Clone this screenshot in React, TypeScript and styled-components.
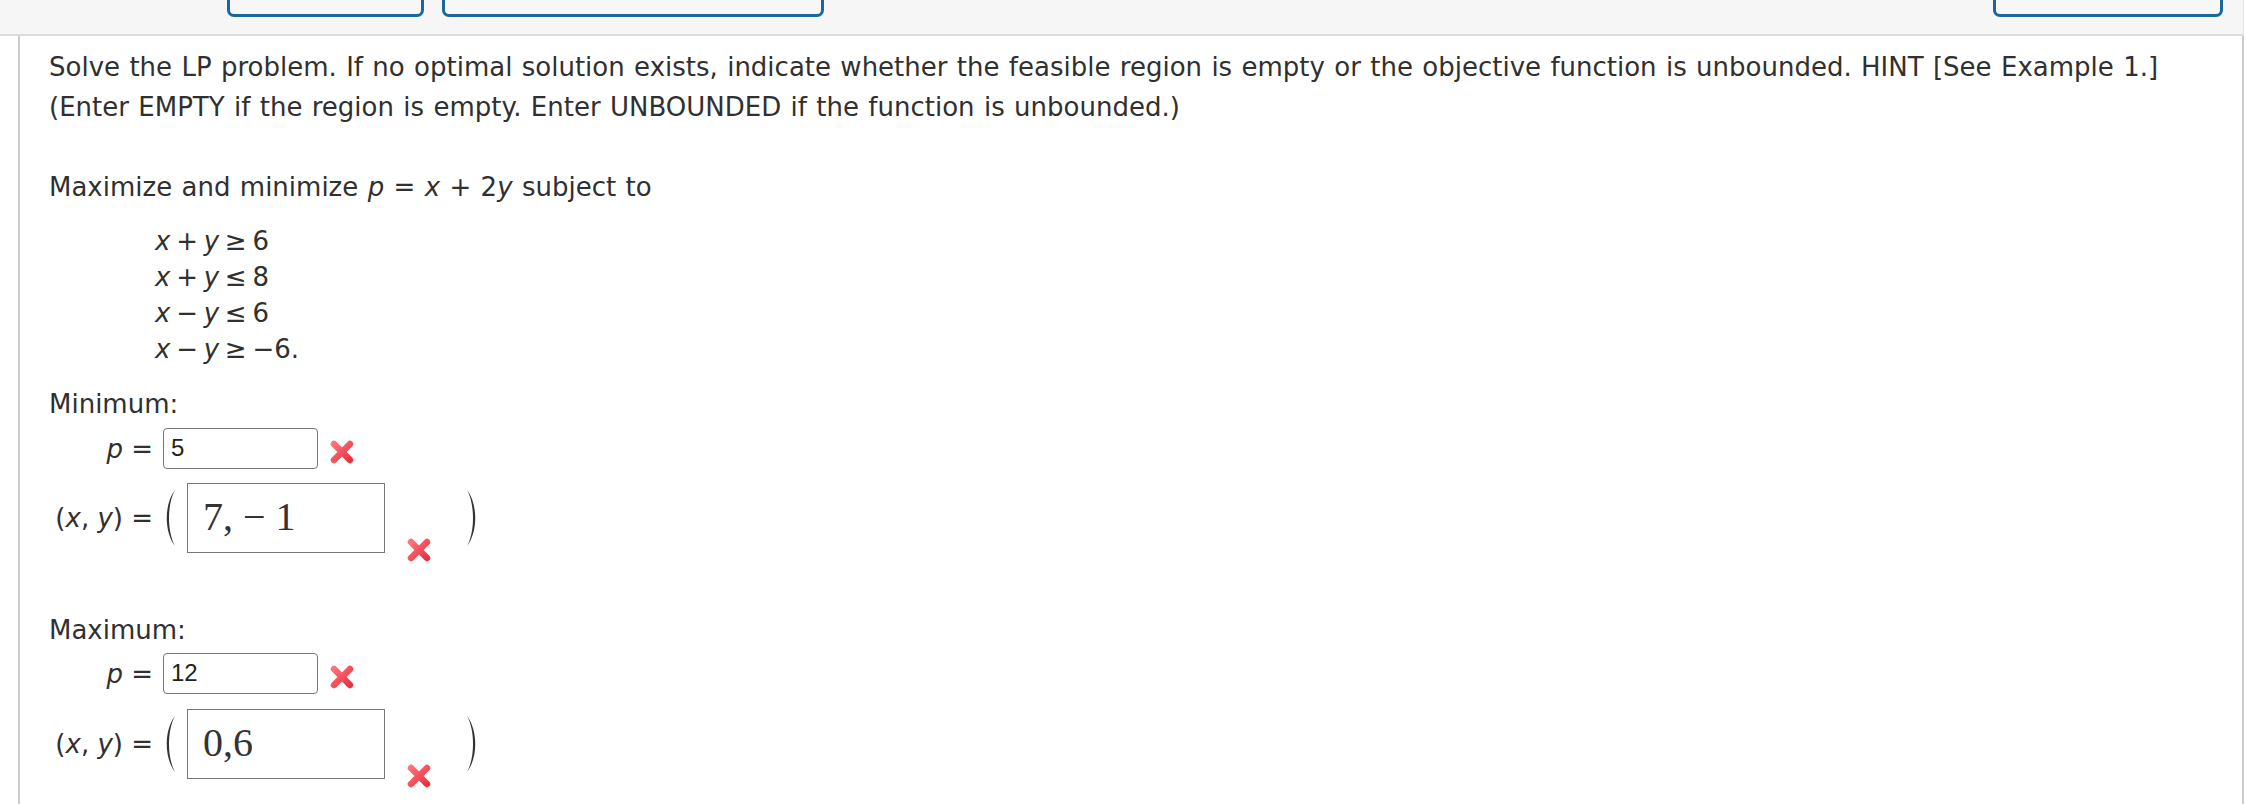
import React from 'react';
import styled, { createGlobalStyle } from 'styled-components';

const GlobalStyle = createGlobalStyle`
  html, body {
    margin: 0;
    padding: 0;
    background: #ffffff;
  }
  body {
    font-family: "DejaVu Sans", Verdana, sans-serif;
    color: #303030;
  }
`;

const Page = styled.div`
  width: 2244px;
`;

const TopBar = styled.div`
  height: 36px;
  background: #f6f6f6;
  border-bottom: 2px solid #dcdcdc;
  border-right: 1px solid #e2e2e2;
  display: flex;
  align-items: flex-end;
  padding: 0 20px 17px 227px;
  box-sizing: border-box;
  gap: 18px;
  overflow: hidden;
`;

const NavButton = styled.div<{ $w: number; $push?: boolean }>`
  flex: none;
  width: ${({ $w }) => $w}px;
  height: 44px;
  box-sizing: border-box;
  border: 3px solid #1a6899;
  border-radius: 7px;
  background: #f7f7f7;
  margin-left: ${({ $push }) => ($push ? 'auto' : '0')};
`;

const Panel = styled.div`
  margin-left: 18px;
  border-left: 2px solid #cccccc;
  border-right: 2px solid #cccccc;
  padding: 11px 0 40px 29px;
  font-size: 26px;
  line-height: 40px;
  word-spacing: 1.1px;
  min-height: 760px;
  box-sizing: border-box;
`;

const Para = styled.p<{ $top?: number }>`
  margin: ${({ $top }) => $top ?? 0}px 0 0 0;
`;

const Var = styled.i`
  font-style: italic;
`;

const Constraints = styled.div`
  margin: 16px 0 0 106px;
  font-size: 26px;
  line-height: 36px;
  word-spacing: -2.5px;
`;

const Label = styled.div<{ $top?: number }>`
  margin-top: ${({ $top }) => $top ?? 0}px;
`;

const AnswerRow = styled.div<{ $top: number }>`
  display: flex;
  align-items: center;
  margin-top: ${({ $top }) => $top}px;
`;

const RowLabel = styled.div`
  width: 104px;
  flex: none;
  text-align: right;
  line-height: 40px;
  margin-right: 10px;
  white-space: nowrap;
  word-spacing: 0;
`;

const TextInput = styled.div`
  width: 155px;
  height: 41px;
  box-sizing: border-box;
  border: 1.5px solid #777777;
  border-radius: 4px;
  padding-left: 7px;
  font-family: "Liberation Sans", Arial, sans-serif;
  font-size: 24px;
  line-height: 38px;
  color: #222222;
`;

const MathBox = styled.div`
  width: 198px;
  height: 70px;
  box-sizing: border-box;
  border: 1.5px solid #777777;
  padding-left: 15px;
  font-family: "Liberation Serif", "Times New Roman", serif;
  font-size: 40px;
  line-height: 66px;
  word-spacing: 0;
  color: #333333;
  margin: 0 20px 0 11px;
`;

const Mark = styled.span<{ $low?: boolean }>`
  display: inline-flex;
  flex: none;
  margin-left: ${({ $low }) => ($low ? '0' : '10px')};
  align-self: ${({ $low }) => ($low ? 'flex-end' : 'center')};
  margin-bottom: ${({ $low }) => ($low ? '-10px' : '0')};
  padding-top: ${({ $low }) => ($low ? '0' : '6px')};
`;

const Paren = styled.span<{ $left?: number }>`
  display: inline-flex;
  flex: none;
  margin-left: ${({ $left }) => $left ?? 0}px;
`;

const WrongIcon = () => (
  <svg width="28" height="26" viewBox="0 0 28 26">
    <defs>
      <linearGradient id="xg" x1="0" y1="0" x2="1" y2="1">
        <stop offset="0" stopColor="#ff717a" />
        <stop offset="1" stopColor="#e8333f" />
      </linearGradient>
    </defs>
    <g stroke="url(#xg)" strokeWidth="6.5" strokeLinecap="round">
      <line x1="6" y1="5" x2="22" y2="21" />
      <line x1="22" y1="5" x2="6" y2="21" />
    </g>
  </svg>
);

const BigParen = ({ right }: { right?: boolean }) => (
  <svg width="13" height="56" viewBox="0 0 13 56">
    <path
      d="M12 0 C1 14 1 42 12 56 C4 42 4 14 12 0 Z"
      fill="#333333"
      transform={right ? 'translate(13 0) scale(-1 1)' : undefined}
    />
  </svg>
);

const PointRow = ({ top, value }: { top: number; value: string }) => (
  <AnswerRow $top={top}>
    <RowLabel>
      (<Var>x</Var>, <Var>y</Var>) =
    </RowLabel>
    <Paren>
      <BigParen />
    </Paren>
    <MathBox>{value}</MathBox>
    <Mark $low>
      <WrongIcon />
    </Mark>
    <Paren $left={33}>
      <BigParen right />
    </Paren>
  </AnswerRow>
);

const ValueRow = ({ top, value }: { top: number; value: string }) => (
  <AnswerRow $top={top}>
    <RowLabel>
      <Var>p</Var> =
    </RowLabel>
    <TextInput>{value}</TextInput>
    <Mark>
      <WrongIcon />
    </Mark>
  </AnswerRow>
);

const App = () => {
  return (
    <>
      <GlobalStyle />
      <Page>
        <TopBar>
          <NavButton $w={197} />
          <NavButton $w={382} />
          <NavButton $w={230} $push />
        </TopBar>
        <Panel>
          <Para>
            Solve the LP problem. If no optimal solution exists, indicate whether the feasible region is empty or
            the objective function is unbounded. HINT [See Example 1.]
            <br />
            (Enter EMPTY if the region is empty. Enter UNBOUNDED if the function is unbounded.)
          </Para>
          <Para $top={40}>
            Maximize and minimize <Var>p</Var> = <Var>x</Var> + 2<Var>y</Var> subject to
          </Para>
          <Constraints>
            <div>
              <Var>x</Var> + <Var>y</Var> ≥ 6
            </div>
            <div>
              <Var>x</Var> + <Var>y</Var> ≤ 8
            </div>
            <div>
              <Var>x</Var> − <Var>y</Var> ≤ 6
            </div>
            <div>
              <Var>x</Var> − <Var>y</Var> ≥ −6.
            </div>
          </Constraints>

          <Label $top={17}>Minimum:</Label>
          <ValueRow top={4} value="5" />
          <PointRow top={14} value="7, − 1" />

          <Label $top={57}>Maximum:</Label>
          <ValueRow top={3} value="12" />
          <PointRow top={15} value="0,6" />
        </Panel>
      </Page>
    </>
  );
};

export default App;
